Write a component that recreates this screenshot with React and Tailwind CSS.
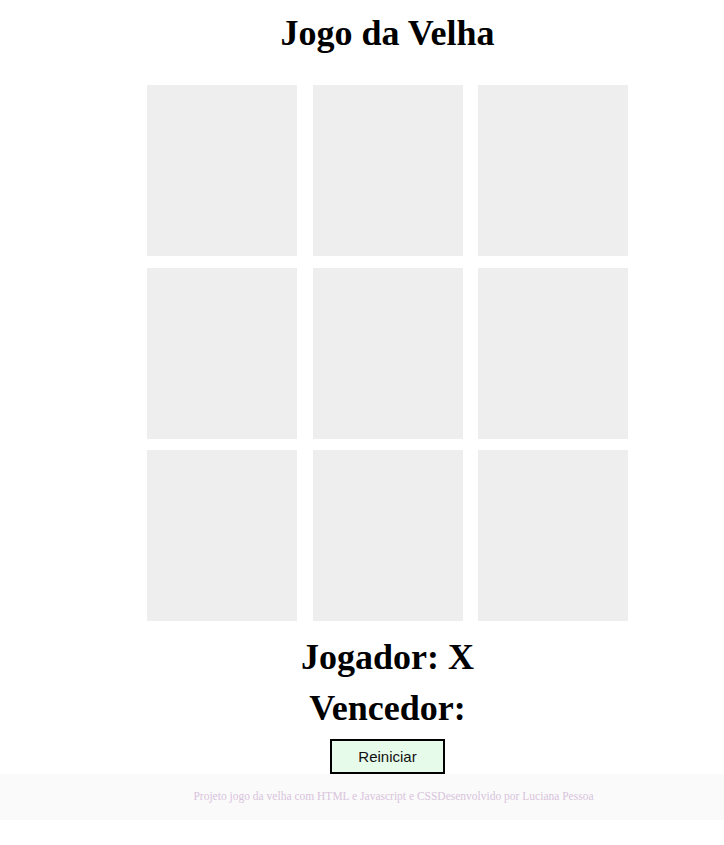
export default function App() {
  const cells = Array.from({ length: 9 })

  return (
    <div className="min-h-screen bg-white font-['Liberation_Serif',serif] text-black">
      <div className="pl-[51px] flex flex-col items-center">
        <h1 className="mt-[13px] text-[36px] leading-[41px] font-bold">Jogo da Velha</h1>

        {/* tabuleiro */}
        <div className="mt-[31px] grid grid-cols-[150px_150px_150px] gap-x-[15.5px] gap-y-[11.5px]">
          {cells.map((_, i) => (
            <div key={i} className="h-[171px] bg-[#eeeeee]" />
          ))}
        </div>

        <h2 className="mt-[16px] text-[36px] leading-[41px] font-bold">Jogador: X</h2>
        <h2 className="mt-[10px] text-[36px] leading-[41px] font-bold">Vencedor:</h2>

        <button className="mt-[10px] w-[115px] h-[35px] pt-[2px] border-2 border-black bg-[#e6fbea] font-['Liberation_Sans',sans-serif] text-[15px] text-[#111]">
          Reiniciar
        </button>
      </div>

      <footer className="h-[46px] bg-[#fafafa] pl-[63px] flex items-center justify-center text-[11.5px] text-[#d8c4dc]">
        Projeto jogo da velha com HTML e Javascript e CSSDesenvolvido por Luciana Pessoa
      </footer>
    </div>
  )
}
